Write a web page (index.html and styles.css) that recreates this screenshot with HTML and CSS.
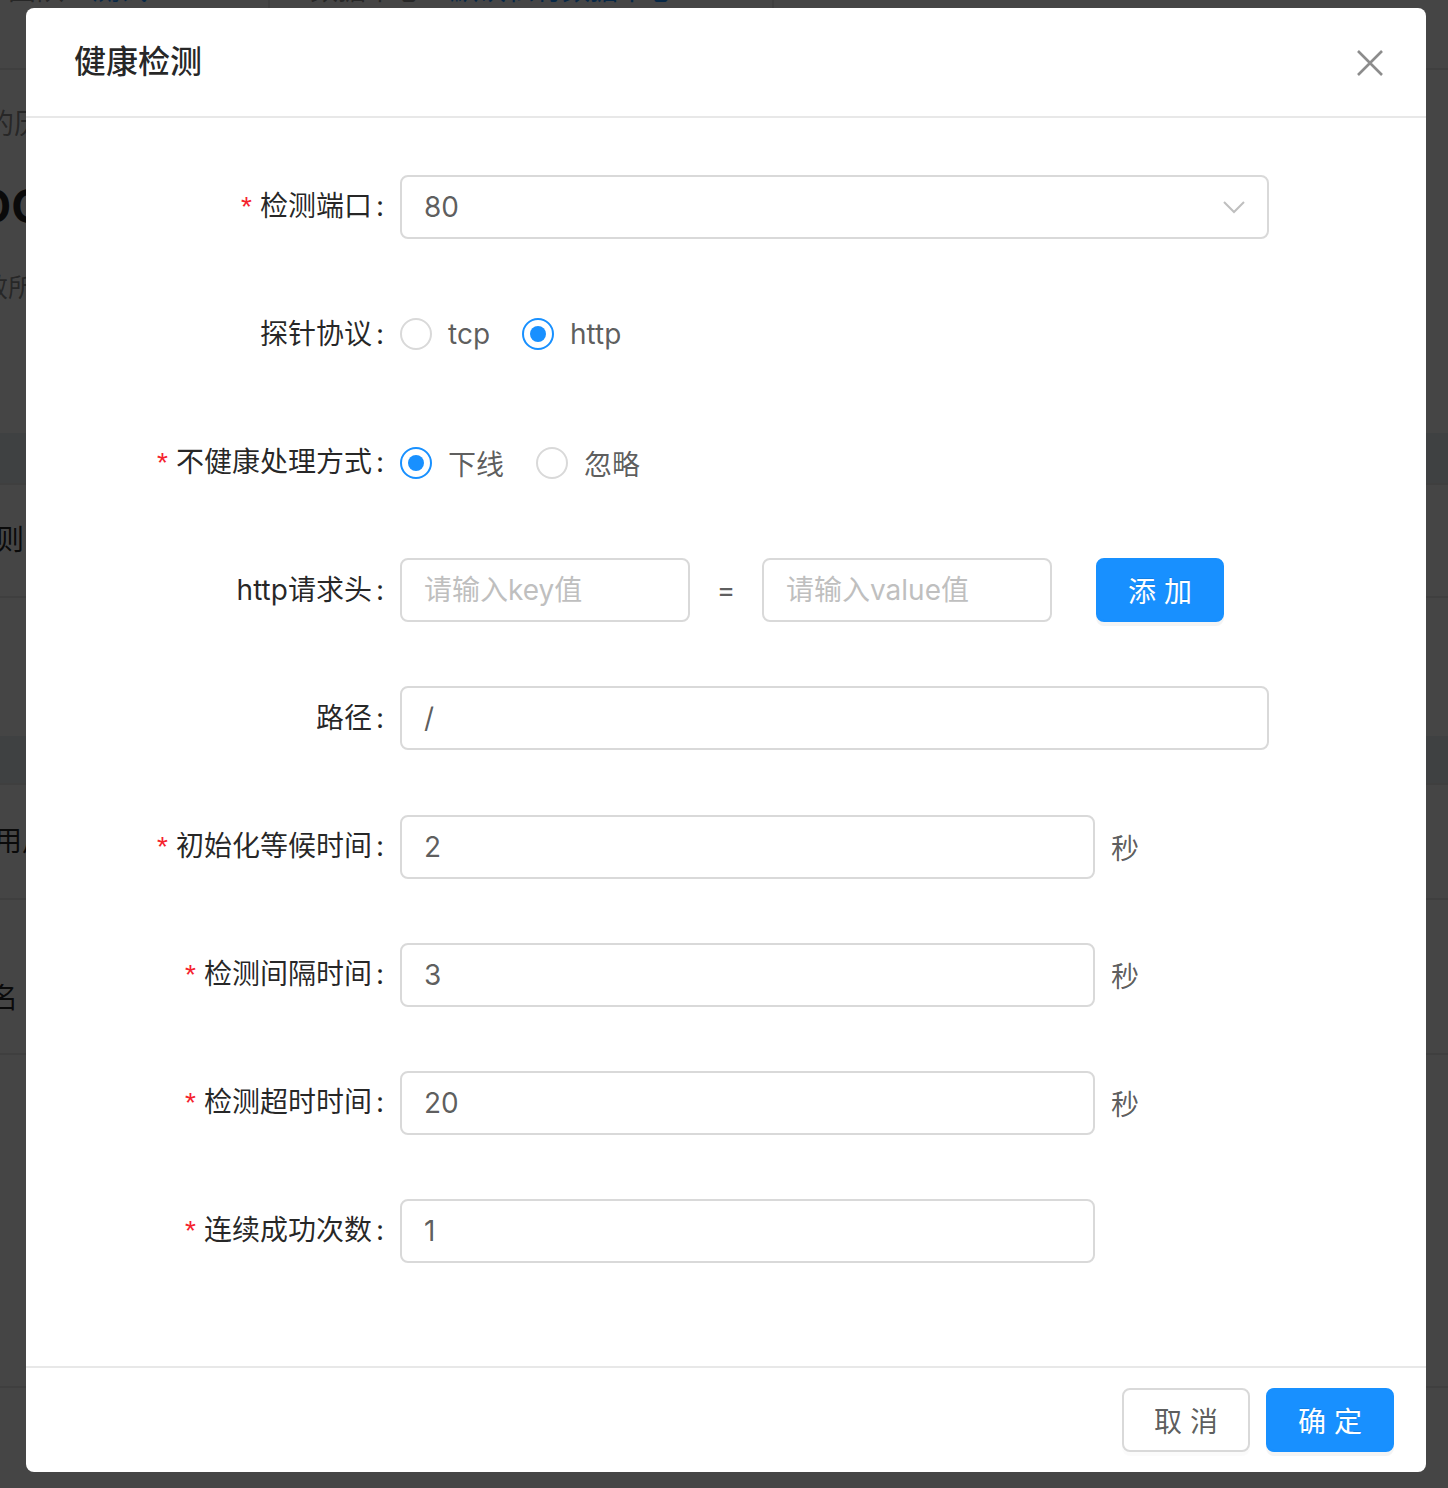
FILE: index.html
```html
<!DOCTYPE html>
<html lang="zh-CN">
<head>
<meta charset="utf-8">
<title>健康检测</title>
<link rel="stylesheet" href="styles.css">
</head>
<body>
<div class="page">
  <div class="bg-top">
    <span class="bg-seg bg-seg-1"><span class="bg-gray">团队：</span><span class="bg-link">测试518∨</span></span>
    <span class="bg-seg bg-seg-2"><span class="bg-gray">数据中心：</span><span class="bg-link">默认私有数据中心∨</span></span>
  </div>
  <div class="bg-b1"><span class="bg-gray off-14">的历史版本</span></div>
  <div class="bg-b2"><span class="bg-big off-22">DC</span></div>
  <div class="bg-b3"><span class="bg-gray off-18">效所有</span></div>
  <div class="bg-sp1"></div>
  <div class="bg-band"></div>
  <div class="bg-row1"><span class="bg-dark off-4">则</span></div>
  <div class="bg-sp2"></div>
  <div class="bg-band2"></div>
  <div class="bg-row2"><span class="bg-dark off-6">用户</span></div>
  <div class="bg-row3"><span class="bg-dark off-10">名</span></div>
  <div class="bg-sp3"></div>
</div>

<div class="overlay">
  <div class="modal">
    <div class="modal-header">
      <div class="modal-title">健康检测</div>
      <button class="modal-close" aria-label="关闭">
        <svg width="32" height="32" viewBox="0 0 32 32"><path d="M4 4 L28 28 M28 4 L4 28" stroke="#8c8c8c" stroke-width="2.6" stroke-linecap="butt" fill="none"/></svg>
      </button>
    </div>
    <div class="modal-body">
      <div class="form-item">
        <div class="label required">检测端口</div>
        <div class="control">
          <div class="select">
            <span class="value">80</span>
            <svg class="arrow" width="24" height="24" viewBox="0 0 24 24"><polyline points="2,7 12,17 22,7" fill="none" stroke="#bfbfbf" stroke-width="2"/></svg>
          </div>
        </div>
      </div>

      <div class="form-item">
        <div class="label">探针协议</div>
        <div class="control">
          <label class="radio"><span class="radio-dot"></span><span class="radio-text">tcp</span></label>
          <label class="radio"><span class="radio-dot checked"></span><span class="radio-text">http</span></label>
        </div>
      </div>

      <div class="form-item">
        <div class="label required">不健康处理方式</div>
        <div class="control">
          <label class="radio"><span class="radio-dot checked"></span><span class="radio-text">下线</span></label>
          <label class="radio"><span class="radio-dot"></span><span class="radio-text">忽略</span></label>
        </div>
      </div>

      <div class="form-item">
        <div class="label">http请求头</div>
        <div class="control">
          <div class="input input-kv placeholder">请输入key值</div>
          <div class="equal">=</div>
          <div class="input input-kv placeholder">请输入value值</div>
          <button class="btn btn-primary btn-add">添 加</button>
        </div>
      </div>

      <div class="form-item">
        <div class="label">路径</div>
        <div class="control">
          <div class="input input-full">/</div>
        </div>
      </div>

      <div class="form-item">
        <div class="label required">初始化等候时间</div>
        <div class="control">
          <div class="input input-short">2</div>
          <span class="unit">秒</span>
        </div>
      </div>

      <div class="form-item">
        <div class="label required">检测间隔时间</div>
        <div class="control">
          <div class="input input-short">3</div>
          <span class="unit">秒</span>
        </div>
      </div>

      <div class="form-item">
        <div class="label required">检测超时时间</div>
        <div class="control">
          <div class="input input-short">20</div>
          <span class="unit">秒</span>
        </div>
      </div>

      <div class="form-item">
        <div class="label required">连续成功次数</div>
        <div class="control">
          <div class="input input-short">1</div>
        </div>
      </div>
    </div>
    <div class="modal-footer">
      <button class="btn btn-default">取 消</button>
      <button class="btn btn-primary">确 定</button>
    </div>
  </div>
</div>
</body>
</html>
```

FILE: styles.css
```css
* { box-sizing: border-box; }

html, body {
  margin: 0;
  padding: 0;
  background: #ffffff;
  font-family: "Inter", "Noto Sans CJK SC", sans-serif;
  overflow: hidden;
}

/* ---------- background page ---------- */
.page {
  width: 1448px;
  height: 1488px;
  overflow: hidden;
  font-size: 28px;
}
.bg-top {
  height: 100px;
  margin-top: -30px;
  border-bottom: 2px solid #e8e8e8;
  display: flex;
  line-height: 40px;
}
.bg-seg { display: block; height: 40px; white-space: nowrap; border-right: 2px solid #e8e8e8; }
.bg-seg-1 { width: 270px; padding-left: 8px; }
.bg-seg-2 { width: 504px; padding-left: 40px; }
.bg-gray { color: rgba(0,0,0,0.45); }
.bg-link { color: #1890ff; }
.bg-dark { color: rgba(0,0,0,0.85); }
.bg-big { color: rgba(0,0,0,0.85); font-size: 46px; font-weight: 700; }
.off-4 { margin-left: -4px; }
.off-6 { margin-left: -6px; }
.off-10 { margin-left: -10px; }
.off-14 { margin-left: -14px; }
.off-18 { margin-left: -18px; }
.off-22 { margin-left: -22px; }
.bg-b1 { height: 94px; padding-top: 34px; line-height: 40px; white-space: nowrap; }
.bg-b2 { height: 84px; line-height: 84px; white-space: nowrap; }
.bg-b3 { height: 80px; line-height: 80px; white-space: nowrap; font-size: 26px; }
.bg-sp1 { height: 105px; }
.bg-band { height: 52px; background: #e9eef5; border-bottom: 2px solid #e8e8e8; }
.bg-row1 { height: 113px; line-height: 111px; border-bottom: 2px solid #e8e8e8; white-space: nowrap; }
.bg-sp2 { height: 138px; }
.bg-band2 { height: 49px; background: #e9eef5; border-bottom: 2px solid #e8e8e8; }
.bg-row2 { height: 115px; line-height: 113px; border-bottom: 2px solid #e8e8e8; white-space: nowrap; }
.bg-row3 { height: 155px; padding-top: 78px; line-height: 40px; border-bottom: 2px solid #e8e8e8; white-space: nowrap; }
.bg-sp3 { height: 333px; border-bottom: 2px solid #e8e8e8; }

/* ---------- overlay + modal ---------- */
.overlay {
  position: fixed;
  inset: 0;
  background: rgba(0,0,0,0.73);
}
.modal {
  width: 1400px;
  margin: 8px 0 0 26px;
  background: #ffffff;
  border-radius: 8px;
  position: relative;
}
.modal-header {
  padding: 32px 48px;
  border-bottom: 2px solid #e8e8e8;
}
.modal-title {
  font-size: 32px;
  line-height: 44px;
  font-weight: 500;
  color: rgba(0,0,0,0.85);
}
.modal-close {
  position: absolute;
  top: 0;
  right: 0;
  width: 112px;
  height: 110px;
  border: 0;
  background: transparent;
  padding: 0;
  display: flex;
  align-items: center;
  justify-content: center;
}
.modal-body {
  padding: 48px;
}

/* ---------- form ---------- */
.form-item {
  display: grid;
  grid-template-columns: 326px 869px;
  height: 80px;
  margin-bottom: 48px;
}
.label {
  text-align: right;
  line-height: 80px;
  font-size: 28px;
  color: rgba(0,0,0,0.85);
  white-space: nowrap;
}
.label::after {
  content: ":";
  margin: 0 16px 0 4px;
}
.label.required::before {
  content: "*";
  color: #f5222d;
  margin-right: 8px;
  font-size: 28px;
  font-family: "Liberation Sans", sans-serif;
}
.control {
  display: flex;
  align-items: center;
  font-size: 28px;
  color: rgba(0,0,0,0.65);
}
.input, .select {
  height: 64px;
  border: 2px solid #d9d9d9;
  border-radius: 8px;
  padding: 0 22px;
  line-height: 60px;
  font-size: 28px;
  color: rgba(0,0,0,0.65);
  background: #fff;
  white-space: nowrap;
}
.select {
  width: 869px;
  display: flex;
  align-items: center;
  justify-content: space-between;
}
.select .arrow { margin-right: -1px; }
.input-full { width: 869px; }
.input-short { width: 695px; }
.input-kv { width: 290px; }
.placeholder { color: #bfbfbf; }
.equal {
  width: 72px;
  text-align: center;
  color: rgba(0,0,0,0.65);
}
.unit {
  margin-left: 16px;
  color: rgba(0,0,0,0.65);
}

.radio {
  display: inline-flex;
  align-items: center;
  margin-right: 16px;
  color: rgba(0,0,0,0.65);
}
.radio-dot {
  width: 32px;
  height: 32px;
  border: 2px solid #d9d9d9;
  border-radius: 50%;
  display: flex;
  align-items: center;
  justify-content: center;
}
.radio-dot.checked { border-color: #1890ff; }
.radio-dot.checked::after {
  content: "";
  width: 16px;
  height: 16px;
  border-radius: 50%;
  background: #1890ff;
}
.radio-text { padding: 0 16px; }

/* ---------- buttons ---------- */
.btn {
  height: 64px;
  width: 128px;
  border-radius: 8px;
  font-size: 28px;
  font-family: "Inter", "Noto Sans CJK SC", sans-serif;
  padding: 0;
  border: 2px solid #d9d9d9;
  background: #fff;
  color: rgba(0,0,0,0.65);
  box-shadow: 0 4px 0 rgba(0,0,0,0.015);
}
.btn-primary {
  background: #1890ff;
  border-color: #1890ff;
  color: #fff;
  text-shadow: 0 -1px 0 rgba(0,0,0,0.12);
  box-shadow: 0 4px 0 rgba(0,0,0,0.045);
}
.btn-add { margin-left: 44px; }

.modal-footer {
  border-top: 2px solid #e8e8e8;
  padding: 20px 32px;
  display: flex;
  justify-content: flex-end;
  gap: 16px;
}
```
